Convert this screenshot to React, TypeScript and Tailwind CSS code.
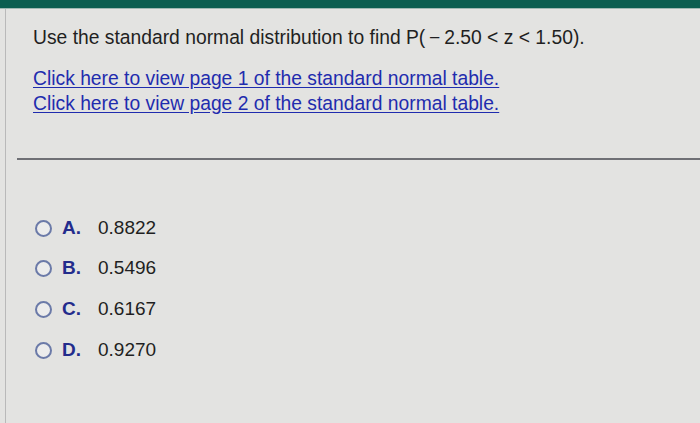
import React from 'react';

const options = [
  { key: 'A', value: '0.8822' },
  { key: 'B', value: '0.5496' },
  { key: 'C', value: '0.6167' },
  { key: 'D', value: '0.9270' },
];

const App: React.FC = () => {
  return (
    <div className="w-[700px] h-[423px] overflow-hidden bg-[#e3e3e1] flex flex-col font-['Liberation_Sans',Arial,sans-serif]">
      {/* top bar */}
      <div className="h-[9px] bg-[#0b5e50] border-b border-[#9fb9b3]" />

      <div className="flex flex-1 pl-[5px]">
        <div className="w-[1px] bg-[#b9b9b9]" />
        <div className="flex-1 flex flex-col">
          {/* question */}
          <div className="pl-[27px] pt-[17px] text-[19.3px] leading-[24px] text-[#1f1f22]">
            Use the standard normal distribution to find P(&thinsp;&minus;&thinsp;2.50 &lt; z &lt; 1.50).
          </div>

          <div className="pl-[27px] pt-[16px] flex flex-col text-[19.3px] leading-[25px] text-[#1f2cae]">
            <a href="#" className="underline underline-offset-2 w-fit">Click here to view page 1 of the standard normal table.</a>
            <a href="#" className="underline underline-offset-2 w-fit">Click here to view page 2 of the standard normal table.</a>
          </div>

          <div className="ml-[11px] mt-[42px] h-[2px] bg-[#6f7075]" />

          {/* answers */}
          <div className="pl-[29px] pt-[56px] flex flex-col gap-[16.7px]">
            {options.map((o) => (
              <div key={o.key} className="flex items-center h-[24px] text-[19px]">
                <span className="w-[17px] h-[17px] rounded-full border-2 border-[#6b7aa8] bg-[#ececec]" />
                <span className="ml-[10px] w-[36px] font-bold text-[#232c8c]">{o.key}.</span>
                <span className="text-[#1f1f22]">{o.value}</span>
              </div>
            ))}
          </div>
        </div>
      </div>
    </div>
  );
};

export default App;
